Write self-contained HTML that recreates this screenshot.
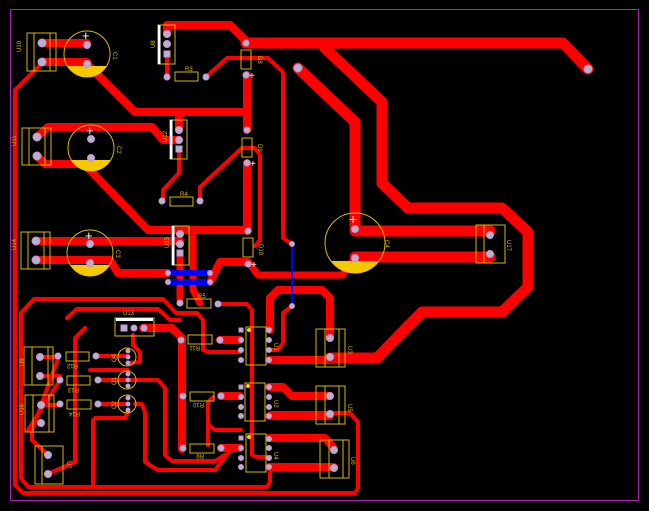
<!DOCTYPE html>
<html><head><meta charset="utf-8"><style>
html,body{margin:0;padding:0;background:#000;}
svg{display:block}
text{font-family:"Liberation Sans",sans-serif;fill:#d9b800;font-size:6px}
</style></head><body>
<svg width="649" height="511" viewBox="0 0 649 511" xmlns="http://www.w3.org/2000/svg">
<rect width="649" height="511" fill="#000"/>
<rect x="10.5" y="9.5" width="628" height="491" fill="none" stroke="#b020b0" stroke-width="1"/>
<g fill="none" stroke="#ff0000" stroke-linecap="round" stroke-linejoin="round">
<g stroke-width="11">
<path d="M246,43 H563 L588,69"/>
<path d="M325,48 L382,102 V183 L408,208 H502 L528,232 V287 L502,312 H422 L377,358 H330"/>
<path d="M298,68 L355,122 V229"/>
<path d="M355,231 H490 M355,257 H490"/>
</g>
<g stroke-width="8">
<path d="M167,34 V25 H230 L246,41"/>
<path d="M87,64 L135,112 H247 V75"/>
<path d="M247,112 V130 M247,163 V231"/>
<path d="M42,43 H87 M42,62 H87"/>
<path d="M37,137 L48,127 H152 L163,140 H178 M179,130 V112"/>
<path d="M37,156 L45,164 H91 M88,168 L148,230 H248"/>
<path d="M180,234 V230"/>
<path d="M36,241 H180 M36,260 H110 L118,273 H168"/>
<path d="M210,282 L220,262 H248"/>
<path d="M143,328 H172 L182,338 V449"/>
<path d="M220,340 H240 M221,396 H240 M221,448 H240"/>
<path d="M270,330 V298 L278,290 H322 L330,298 V338"/>
<path d="M269,360 H330 M269,387 H283 L292,396 H330 M269,416 H330 M269,438 H325 L333,447 M269,467 H334"/>
</g>
<g stroke-width="7">
<path d="M250,264 L258,275 H342 L355,258"/>
<path d="M180,253 V300 M193,236 V290 L200,303"/>
</g>
<g stroke-width="4">
<path d="M167,54 V77 M206,77 L227,58 H268 L283,72 V238 L292,244"/>
<path d="M179,149 V173 L163,190 V201 M200,201 V187 L242,148 H255 L260,155 V240 L255,246"/>
<path d="M42,63 L15,90 V485 L23,493 H355 L358,488 V422 L350,413 H270"/>
<path d="M269,350 H278 L283,343 V313 L292,306"/>
<path d="M21,313 L34,299 H163 L176,313 H197 L203,320 V350 L208,352 H240"/>
<path d="M218,304 H247 L252,310 V455 L257,457 H270"/>
<path d="M21,313 V478 L28,487 H267 L270,482 V468"/>
<path d="M67,318 L77,309 H158 L170,320 H180"/>
<path d="M85,328 L75,338 V462 L48,474"/>
<path d="M133,335 V345 L140,352 V362 L128,363 M40,357 H58 M40,376 H60 M41,405 H60 M96,356 H128 M98,380 H158 L165,388 V455 L172,461 H215 L225,455"/>
<path d="M98,404 H128 M135,404 H142 L145,412 V462 L158,470 H215 L232,448 M232,448 H240"/>
<path d="M90,370 H128 M128,412 L125,418 H95 L93,420 V484"/>
<path d="M213,397 L208,402 V424 L215,430 H241 M208,410 V445"/>
<path d="M59,356 L32,430 V440 L48,455 M60,380 L28,430"/>
</g>
</g>
<g stroke="#0000ff">
<path d="M168,273 H210 M168,282 H210" stroke-width="6"/>
<path d="M292,244 V306" stroke-width="2"/>
</g>
<g fill="none" stroke="#d9b800" stroke-width="1">
<rect x="27" y="33" width="29" height="38"/><line x1="34" y1="33" x2="34" y2="71"/><line x1="50" y1="33" x2="50" y2="71"/>
<rect x="22" y="128" width="29" height="37"/><line x1="29" y1="128" x2="29" y2="165"/><line x1="45" y1="128" x2="45" y2="165"/>
<rect x="21" y="232" width="29" height="37"/><line x1="28" y1="232" x2="28" y2="269"/><line x1="44" y1="232" x2="44" y2="269"/>
<circle cx="87" cy="54" r="23"/><circle cx="91" cy="148" r="23"/><circle cx="90" cy="253" r="23"/><circle cx="355" cy="243" r="30"/>
<rect x="158" y="25" width="17" height="39"/><rect x="170" y="120" width="17" height="39"/><rect x="172" y="226" width="17" height="39"/>
<rect x="175" y="72" width="23" height="9"/><rect x="170" y="197" width="23" height="9"/><rect x="187" y="299" width="24" height="9"/>
<rect x="188" y="335" width="24" height="9"/><rect x="190" y="392" width="24" height="9"/><rect x="190" y="444" width="24" height="9"/>
<rect x="66" y="352" width="23" height="9"/><rect x="67" y="376" width="23" height="9"/><rect x="67" y="400" width="24" height="9"/>
<rect x="241" y="50" width="10" height="19"/><rect x="242" y="138" width="10" height="19"/><rect x="243" y="238" width="10" height="19"/>
<rect x="246" y="327" width="20" height="38"/><rect x="245" y="383" width="20" height="38"/><rect x="246" y="434" width="20" height="38"/>
<rect x="316" y="329" width="29" height="38"/><line x1="325" y1="329" x2="325" y2="367"/><line x1="339" y1="329" x2="339" y2="367"/>
<rect x="316" y="386" width="29" height="38"/><line x1="325" y1="386" x2="325" y2="424"/><line x1="339" y1="386" x2="339" y2="424"/>
<rect x="320" y="440" width="29" height="38"/><line x1="329" y1="440" x2="329" y2="478"/><line x1="343" y1="440" x2="343" y2="478"/>
<rect x="476" y="225" width="29" height="38"/><line x1="484" y1="225" x2="484" y2="263"/>
<rect x="24" y="347" width="29" height="38"/><line x1="32" y1="347" x2="32" y2="385"/><line x1="48" y1="347" x2="48" y2="385"/>
<rect x="25" y="395" width="29" height="37"/><line x1="33" y1="395" x2="33" y2="432"/><line x1="49" y1="395" x2="49" y2="432"/>
<rect x="35" y="446" width="28" height="38"/><line x1="42" y1="446" x2="42" y2="484"/>
<rect x="115" y="318" width="39" height="18"/>
<circle cx="127" cy="357" r="9"/><circle cx="127" cy="380" r="9"/><circle cx="127" cy="404" r="9"/>
</g>
<g fill="#f5c800">
<path d="M67.4,66 A23,23 0 0 0 106.6,66 Z"/><path d="M71.4,160 A23,23 0 0 0 110.6,160 Z"/><path d="M70.4,265 A23,23 0 0 0 109.6,265 Z"/><path d="M331,261 A30,30 0 0 0 379,261 Z"/>
</g>
<rect x="116" y="318" width="37" height="3" fill="#fff"/>
<g fill="#fff"><rect x="158" y="25" width="2.5" height="39"/><rect x="170" y="120" width="2.5" height="39"/><rect x="172" y="226" width="2.5" height="39"/></g>
<g fill="#b4b4c4" stroke="#c890e0" stroke-width="1">
<circle cx="42" cy="43" r="4"/><circle cx="42" cy="62" r="4"/><circle cx="87" cy="45" r="3.5"/><circle cx="87" cy="64" r="3.5"/>
<circle cx="37" cy="137" r="4"/><circle cx="37" cy="156" r="4"/><circle cx="91" cy="139" r="3.5"/><circle cx="91" cy="158" r="3.5"/>
<circle cx="36" cy="241" r="4"/><circle cx="36" cy="260" r="4"/><circle cx="90" cy="244" r="3.5"/><circle cx="90" cy="263" r="3.5"/>
<circle cx="167" cy="34" r="3.5"/><circle cx="167" cy="44" r="3.5"/><circle cx="179" cy="130" r="3.5"/><circle cx="179" cy="140" r="3.5"/><circle cx="180" cy="234" r="3.5"/><circle cx="180" cy="244" r="3.5"/>
<circle cx="167" cy="77" r="3"/><circle cx="206" cy="77" r="3"/><circle cx="162" cy="201" r="3"/><circle cx="200" cy="201" r="3"/>
<circle cx="246" cy="43" r="3"/><circle cx="246" cy="75" r="3"/><circle cx="247" cy="130" r="3"/><circle cx="247" cy="163" r="3"/><circle cx="248" cy="231" r="3"/><circle cx="248" cy="264" r="3"/>
<circle cx="298" cy="68" r="4"/><circle cx="588" cy="69" r="4"/><circle cx="355" cy="229" r="3.5"/><circle cx="355" cy="258" r="3.5"/><circle cx="490" cy="235" r="3.5"/><circle cx="490" cy="254" r="3.5"/>
<circle cx="292" cy="244" r="2.5"/><circle cx="292" cy="306" r="2.5"/>
<circle cx="168" cy="273" r="2.5"/><circle cx="168" cy="282" r="2.5"/><circle cx="210" cy="273" r="2.5"/><circle cx="210" cy="282" r="2.5"/>
<circle cx="180" cy="303" r="3"/><circle cx="218" cy="304" r="3"/><circle cx="181" cy="340" r="3"/><circle cx="220" cy="340" r="3"/><circle cx="183" cy="396" r="3"/><circle cx="221" cy="396" r="3"/><circle cx="183" cy="448" r="3"/><circle cx="221" cy="448" r="3"/>
<circle cx="241" cy="340" r="2.5"/><circle cx="241" cy="350" r="2.5"/><circle cx="241" cy="360" r="2.5"/><circle cx="269" cy="330" r="2.5"/><circle cx="269" cy="340" r="2.5"/><circle cx="269" cy="350" r="2.5"/><circle cx="269" cy="360" r="2.5"/>
<circle cx="241" cy="397" r="2.5"/><circle cx="241" cy="407" r="2.5"/><circle cx="241" cy="416" r="2.5"/><circle cx="269" cy="387" r="2.5"/><circle cx="269" cy="397" r="2.5"/><circle cx="269" cy="407" r="2.5"/><circle cx="269" cy="416" r="2.5"/>
<circle cx="241" cy="448" r="2.5"/><circle cx="241" cy="458" r="2.5"/><circle cx="241" cy="467" r="2.5"/><circle cx="269" cy="439" r="2.5"/><circle cx="269" cy="448" r="2.5"/><circle cx="269" cy="458" r="2.5"/><circle cx="269" cy="467" r="2.5"/>
<circle cx="330" cy="338" r="3.5"/><circle cx="330" cy="357" r="3.5"/><circle cx="330" cy="396" r="3.5"/><circle cx="330" cy="414" r="3.5"/><circle cx="334" cy="450" r="3.5"/><circle cx="334" cy="468" r="3.5"/>
<circle cx="40" cy="357" r="3.5"/><circle cx="40" cy="376" r="3.5"/><circle cx="41" cy="405" r="3.5"/><circle cx="41" cy="423" r="3.5"/><circle cx="48" cy="455" r="3.5"/><circle cx="48" cy="474" r="3.5"/>
<circle cx="58" cy="356" r="3"/><circle cx="96" cy="356" r="3"/><circle cx="60" cy="380" r="3"/><circle cx="98" cy="380" r="3"/><circle cx="60" cy="404" r="3"/><circle cx="98" cy="404" r="3"/>
<circle cx="134" cy="328" r="3"/><circle cx="144" cy="328" r="3"/>
<circle cx="128" cy="351" r="2"/><circle cx="128" cy="357" r="2"/><circle cx="128" cy="363" r="2"/><circle cx="128" cy="374" r="2"/><circle cx="128" cy="380" r="2"/><circle cx="128" cy="386" r="2"/><circle cx="128" cy="398" r="2"/><circle cx="128" cy="404" r="2"/><circle cx="128" cy="410" r="2"/>
</g>
<g fill="#b4b4c4" stroke="#c890e0" stroke-width="1">
<rect x="164" y="51" width="6" height="6"/><rect x="176" y="146" width="6" height="6"/><rect x="177" y="250" width="6" height="6"/><rect x="121" y="325" width="6" height="6"/>
<rect x="239" y="328" width="4" height="4"/><rect x="239" y="385" width="4" height="4"/><rect x="239" y="436" width="4" height="4"/>
</g>
<g fill="#ffd000"><circle cx="249" cy="330" r="2"/><circle cx="248" cy="386" r="2"/><circle cx="249" cy="437" r="2"/></g>
<g>
<text x="82" y="40" style="fill:#fff;font-size:13px">+</text><text x="86" y="135" style="fill:#fff;font-size:13px">+</text><text x="85" y="240" style="fill:#fff;font-size:13px">+</text><text x="349" y="224" style="fill:#fff;font-size:14px">+</text>
<text x="249" y="79" style="fill:#fff;font-size:10px">+</text><text x="250" y="167" style="fill:#fff;font-size:10px">+</text><text x="251" y="268" style="fill:#fff;font-size:10px">+</text>
</g>
<g>
<text x="185" y="71">R3</text><text x="180" y="196">R4</text><text x="198" y="298">R5</text><text x="123" y="315">U13</text>
<text transform="translate(21,52) rotate(-90)">U10</text><text transform="translate(16,146) rotate(-90)">U11</text><text transform="translate(16,250) rotate(-90)">U14</text>
<text transform="translate(155,48) rotate(-90)">U8</text><text transform="translate(167,142) rotate(-90)">U12</text><text transform="translate(169,248) rotate(-90)">U15</text>
<text transform="translate(113,52) rotate(90)">C1</text><text transform="translate(117,146) rotate(90)">C2</text><text transform="translate(116,250) rotate(90)">C3</text><text transform="translate(385,240) rotate(90)">C4</text>
<text transform="translate(258,56) rotate(90)">D8</text><text transform="translate(258,144) rotate(90)">D9</text><text transform="translate(259,244) rotate(90)">D10</text>
<text transform="translate(507,240) rotate(90)">U17</text><text transform="translate(348,346) rotate(90)">U3</text><text transform="translate(348,404) rotate(90)">U5</text><text transform="translate(351,457) rotate(90)">U6</text>
<text transform="translate(274,343) rotate(90)">U1</text><text transform="translate(274,400) rotate(90)">U2</text><text transform="translate(274,452) rotate(90)">U4</text>
<text transform="translate(24,366) rotate(-90)">U9</text><text transform="translate(24,415) rotate(-90)">U16</text><text transform="translate(67,461) rotate(90)">U7</text>
<text transform="translate(200,346) rotate(180)">R11</text><text transform="translate(204,403) rotate(180)">R10</text><text transform="translate(204,454) rotate(180)">R9</text>
<text transform="translate(78,364) rotate(180)">R12</text><text transform="translate(79,388) rotate(180)">R13</text><text transform="translate(80,412) rotate(180)">R14</text>
<text transform="translate(116,362) rotate(-90)">Q4</text><text transform="translate(116,385) rotate(-90)">Q1</text><text transform="translate(116,409) rotate(-90)">Q2</text>
</g>
</svg>
</body></html>
